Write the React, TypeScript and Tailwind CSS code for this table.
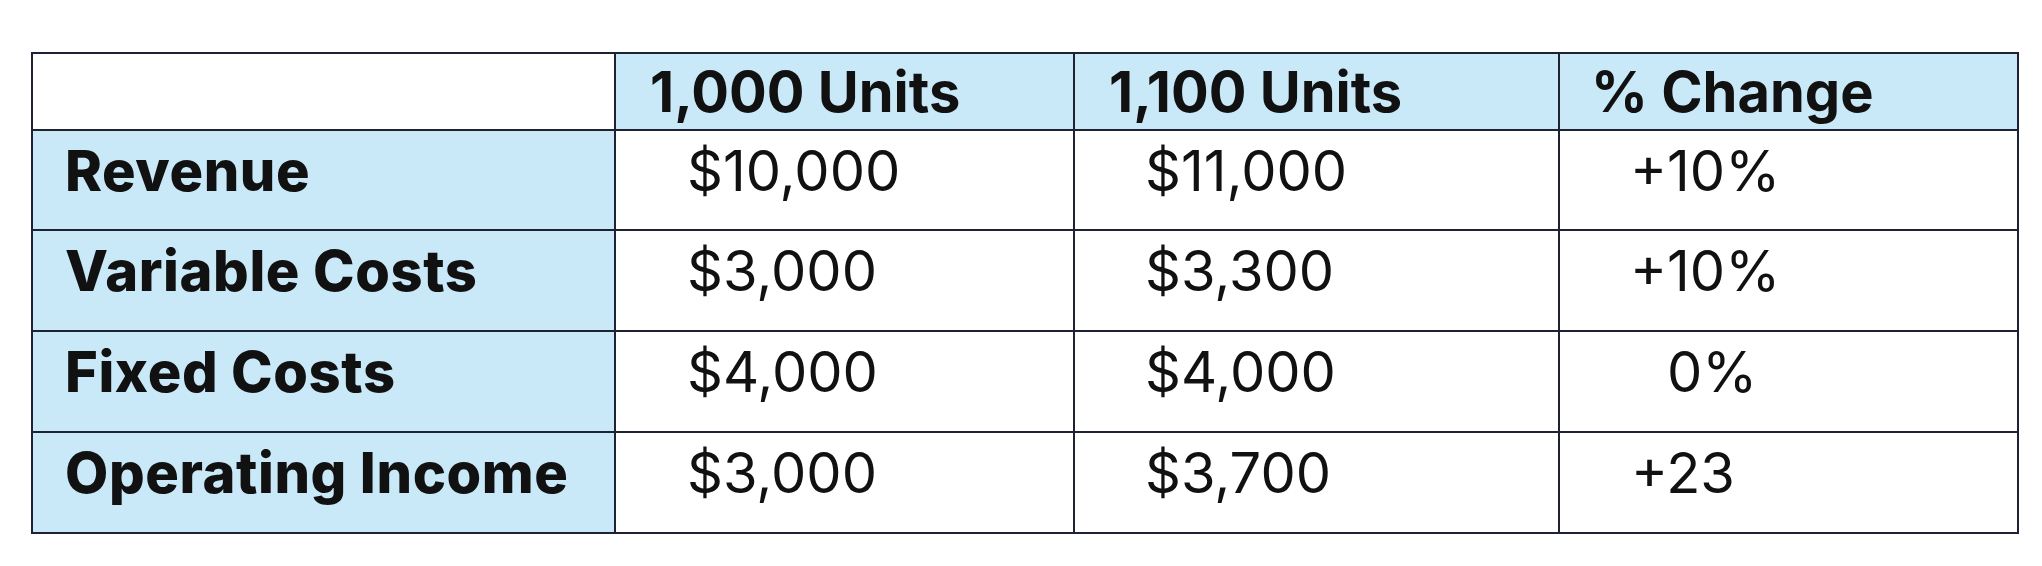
import React from "react"

const rows = [
  { label: "Revenue", a: "$10,000", b: "$11,000", c: "+10%", cPad: "pl-[70px]" },
  { label: "Variable Costs", a: "$3,000", b: "$3,300", c: "+10%", cPad: "pl-[70px]" },
  { label: "Fixed Costs", a: "$4,000", b: "$4,000", c: "0%", cPad: "pl-[107px]" },
  { label: "Operating Income", a: "$3,000", b: "$3,700", c: "+23", cPad: "pl-[71px]" },
]

export default function App() {
  return (
    <div className="min-h-[566px] w-[2042px] bg-white pl-[31px] pt-[52px] font-['Inter',sans-serif] text-[#111]">
      <div className="grid w-[1988px] grid-cols-[581px_457px_483px_457px] grid-rows-[75px_98px_99px_99px_99px] gap-[2px] bg-[#1e2233] p-[2px]">
        {/* Header */}
        <div className="bg-white" />
        <div className="bg-[#c9e8f8] pl-[34px] pt-[10px] text-[56px] font-bold leading-[56px]">1,000 Units</div>
        <div className="bg-[#c9e8f8] pl-[34px] pt-[10px] text-[56px] font-bold leading-[56px]">1,100 Units</div>
        <div className="bg-[#c9e8f8] pl-[31px] pt-[10px] text-[56px] font-bold leading-[56px]">% Change</div>

        {rows.map((r) => (
          <React.Fragment key={r.label}>
            <div className="bg-[#c9e8f8] pl-[32px] pt-[12px] text-[56px] font-extrabold leading-[56px] tracking-[0.6px]">{r.label}</div>
            <div className="bg-white pl-[71px] pt-[12px] text-[56px] leading-[56px]">{r.a}</div>
            <div className="bg-white pl-[70px] pt-[12px] text-[56px] leading-[56px]">{r.b}</div>
            <div className={`bg-white ${r.cPad} pt-[12px] text-[56px] leading-[56px]`}>{r.c}</div>
          </React.Fragment>
        ))}
      </div>
    </div>
  )
}
